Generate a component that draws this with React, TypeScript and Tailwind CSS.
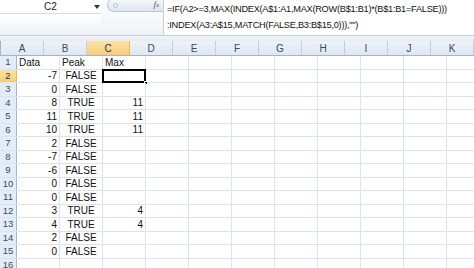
import React from "react";

const cols = ["A", "B", "C", "D", "E", "F", "G", "H", "I", "J", "K"];

const data: [string, string, string][] = [
  ["Data", "Peak", "Max"],
  ["-7", "FALSE", ""],
  ["0", "FALSE", ""],
  ["8", "TRUE", "11"],
  ["11", "TRUE", "11"],
  ["10", "TRUE", "11"],
  ["2", "FALSE", ""],
  ["-7", "FALSE", ""],
  ["-6", "FALSE", ""],
  ["0", "FALSE", ""],
  ["0", "FALSE", ""],
  ["3", "TRUE", "4"],
  ["4", "TRUE", "4"],
  ["2", "FALSE", ""],
  ["0", "FALSE", ""],
  ["", "", ""],
];

function FormulaBar() {
  return (
    <div className="flex h-[36px] border-b border-[#c5cfdc]">
      {/* name box */}
      <div className="flex w-[101px] flex-col bg-[#f3f5f9]">
        <div className="relative flex h-[14px] items-center justify-center border-b border-[#d6dde7] bg-white text-[10px] text-[#222]">
          C2
          <svg className="absolute right-[1px] top-[5px]" width="6" height="4" viewBox="0 0 6 4">
            <path d="M0 0 L6 0 L3 4 Z" fill="#333" />
          </svg>
        </div>
        <div className="flex-1 bg-gradient-to-b from-white to-[#eef1f6]" />
      </div>
      {/* fx area */}
      <div className="flex w-[62px] flex-col bg-gradient-to-b from-white to-[#eef1f6] pl-[6px]">
        <div className="-mt-[2px] flex h-[14px] items-center justify-between rounded-l-[8px] border border-r-0 border-[#b9c6d8] bg-gradient-to-b from-[#f6f8fb] to-[#dfe6f0] pl-[5px] pr-[4px]">
          <div className="h-[5px] w-[5px] rounded-full border border-[#b4c1d3] bg-[#eef2f7]" />
          <span className="text-[9px] italic text-[#555]" style={{ fontFamily: '"Liberation Serif", serif' }}>
            f<span className="text-[7px]">x</span>
          </span>
        </div>
      </div>
      {/* formula */}
      <div className="flex-1 border-l border-[#c5cfdc] bg-white pl-[3px] pt-[1px] text-[9.2px] leading-[16px] tracking-[-0.25px] text-[#111]">
        <div className="whitespace-nowrap">=IF(A2&gt;=3,MAX(INDEX(A$1:A1,MAX(ROW(B$1:B1)*(B$1:B1=FALSE)))</div>
        <div className="whitespace-nowrap">:INDEX(A3:A$15,MATCH(FALSE,B3:B$15,0))),"")</div>
      </div>
    </div>
  );
}

function HeaderRow() {
  return (
    <div className="flex h-[15px] border-b border-[#9eb6ce]">
      <div className="relative w-[17px] border-r border-[#9eb6ce] bg-gradient-to-b from-[#e4ecf7] to-[#d3deee]">
        <svg className="absolute bottom-[2px] right-[2px]" width="8" height="8" viewBox="0 0 8 8">
          <path d="M8 0 L8 8 L0 8 Z" fill="#c3cfe0" />
        </svg>
      </div>
      {cols.map((c) => (
        <div
          key={c}
          className={
            c === "C"
              ? "flex w-[43px] shrink-0 items-center justify-center border-r border-[#f2b54b] bg-gradient-to-b from-[#fbe2a6] to-[#f8cc79] text-[10px] text-[#333]"
              : "flex w-[43px] shrink-0 items-center justify-center border-r border-[#c0cfe0] bg-gradient-to-b from-[#eef2f8] to-[#dfe7f2] text-[10px] text-[#3c4a5e]"
          }
        >
          {c}
        </div>
      ))}
    </div>
  );
}

function Row({ n, vals }: { n: number; vals: [string, string, string] }) {
  const sel = n === 2;
  const isText = n === 1;
  return (
    <div className="flex h-[13.5px] border-b border-[#dde3ec]">
      <div
        className={
          sel
            ? "flex w-[17px] shrink-0 items-center justify-center border-r border-[#f2b54b] bg-gradient-to-b from-[#fbe2a6] to-[#f8cc79] text-[9.5px] text-[#333]"
            : "flex w-[17px] shrink-0 items-center justify-center border-r border-[#9eb6ce] bg-[#e4ecf7] text-[9.5px] text-[#3c4a5e]"
        }
      >
        {n}
      </div>
      <div className={`flex w-[43px] shrink-0 items-center border-r border-[#dde3ec] px-[2px] text-[10px] text-[#111] ${isText ? "justify-start" : "justify-end"}`}>
        {vals[0]}
      </div>
      <div className={`flex w-[43px] shrink-0 items-center border-r border-[#dde3ec] px-[2px] text-[10px] text-[#111] ${isText ? "justify-start" : "justify-center"}`}>
        {vals[1]}
      </div>
      <div className={`relative flex w-[43px] shrink-0 items-center border-r border-[#dde3ec] px-[2px] text-[10px] text-[#111] ${isText ? "justify-start" : "justify-end"}`}>
        {vals[2]}
        {sel && (
          <>
            <div className="absolute -left-[1px] -top-[1px] h-[14.5px] w-[44px] border-2 border-black" />
            <div className="absolute -bottom-[3px] -right-[3px] h-[4px] w-[4px] border border-white bg-black" />
          </>
        )}
      </div>
      {cols.slice(3).map((c) => (
        <div key={c} className="w-[43px] shrink-0 border-r border-[#dde3ec]" />
      ))}
    </div>
  );
}

export default function App() {
  return (
    <div
      className="h-[268px] w-[474px] overflow-hidden bg-white"
      style={{ fontFamily: '"Liberation Sans", Arial, sans-serif' }}
    >
      <FormulaBar />
      <div className="h-[5px] bg-gradient-to-b from-[#f2f4f8] to-[#e6ebf2]" />
      <HeaderRow />
      {data.map((vals, i) => (
        <Row key={i} n={i + 1} vals={vals} />
      ))}
    </div>
  );
}
